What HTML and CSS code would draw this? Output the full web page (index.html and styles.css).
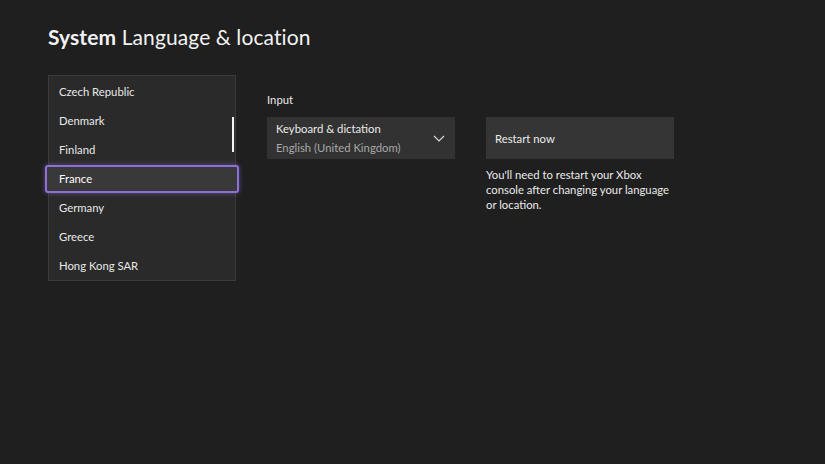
FILE: index.html
```html
<!DOCTYPE html>
<html>
<head>
<meta charset="utf-8">
<link rel="stylesheet" href="styles.css">
</head>
<body>
<header class="header">
  <h1 class="title"><span class="title-strong">System</span> Language &amp; location</h1>
</header>
<main class="content">
  <div class="list">
    <div class="row">Czech Republic</div>
    <div class="row">Denmark</div>
    <div class="row">Finland</div>
    <div class="row row-selected">France</div>
    <div class="row">Germany</div>
    <div class="row">Greece</div>
    <div class="row">Hong Kong SAR</div>
    <div class="scrollbar"></div>
  </div>
  <section class="column">
    <div class="label">Input</div>
    <div class="dropdown">
      <div class="dropdown-text">
        <div class="dropdown-title">Keyboard &amp; dictation</div>
        <div class="dropdown-value">English (United Kingdom)</div>
      </div>
      <svg class="chevron" width="12" height="7" viewBox="0 0 12 7"><path d="M1 1 L6 6 L11 1" fill="none" stroke="#d8d8d8" stroke-width="1.2"/></svg>
    </div>
  </section>
  <section class="column">
    <div class="button">Restart now</div>
    <p class="note">You'll need to restart your Xbox console after changing your language or location.</p>
  </section>
</main>
</body>
</html>
```

FILE: styles.css
```css
html, body {
  margin: 0;
  padding: 0;
  background: #1f1f1f;
  color: #f0f0f0;
  font-family: "Lato", "Open Sans", sans-serif;
}
body {
  width: 825px;
  height: 464px;
  overflow: hidden;
}
.header {
  padding: 24px 0 0 48px;
  height: 75px;
  box-sizing: border-box;
}
.title {
  margin: 0;
  font-size: 21px;
  font-weight: 400;
  line-height: 26px;
  color: #f2f2f2;
  letter-spacing: 0.1px;
}
.title-strong {
  font-weight: 700;
}
.content {
  display: flex;
  gap: 31px;
  padding-left: 48px;
  align-items: flex-start;
}
.list {
  position: relative;
  width: 188px;
  box-sizing: border-box;
  border: 1px solid #3b3b3b;
  background: #2a2a2a;
  padding: 1px 0 0 0;
}
.row {
  height: 29.2px;
  line-height: 29.2px;
  padding-left: 10px;
  font-size: 11.3px;
  color: #e8e8e8;
}
.row-selected {
  margin: 0 -4px;
  padding-left: 12px;
  height: 28px;
  line-height: 24px;
  box-sizing: border-box;
  border: 2px solid #8c70d8;
  border-radius: 3px;
  background: #3a3939;
  box-shadow: 0 0 5px rgba(140, 110, 220, 0.55);
  color: #ffffff;
  position: relative;
}
.scrollbar {
  position: absolute;
  right: 1px;
  top: 41px;
  width: 2px;
  height: 35px;
  background: #f4f4f4;
}
.column {
  width: 188px;
  display: flex;
  flex-direction: column;
}
.label {
  margin-top: 17px;
  height: 25px;
  font-size: 11.3px;
  line-height: 16px;
  color: #e8e8e8;
}
.dropdown {
  height: 42px;
  background: #323232;
  display: flex;
  align-items: center;
  justify-content: space-between;
  padding: 0 10px 0 9px;
}
.dropdown-title {
  font-size: 11.3px;
  line-height: 19px;
  color: #eaeaea;
}
.dropdown-value {
  font-size: 11.3px;
  line-height: 19px;
  color: #a8a8a8;
}
.chevron {
  display: block;
}
.button {
  margin-top: 42px;
  height: 42px;
  background: #353535;
  display: flex;
  align-items: center;
  padding-left: 9px;
  font-size: 11.3px;
  color: #ececec;
}
.note {
  margin: 8px 0 0 0;
  font-size: 11.3px;
  line-height: 15px;
  color: #eaeaea;
}
```
